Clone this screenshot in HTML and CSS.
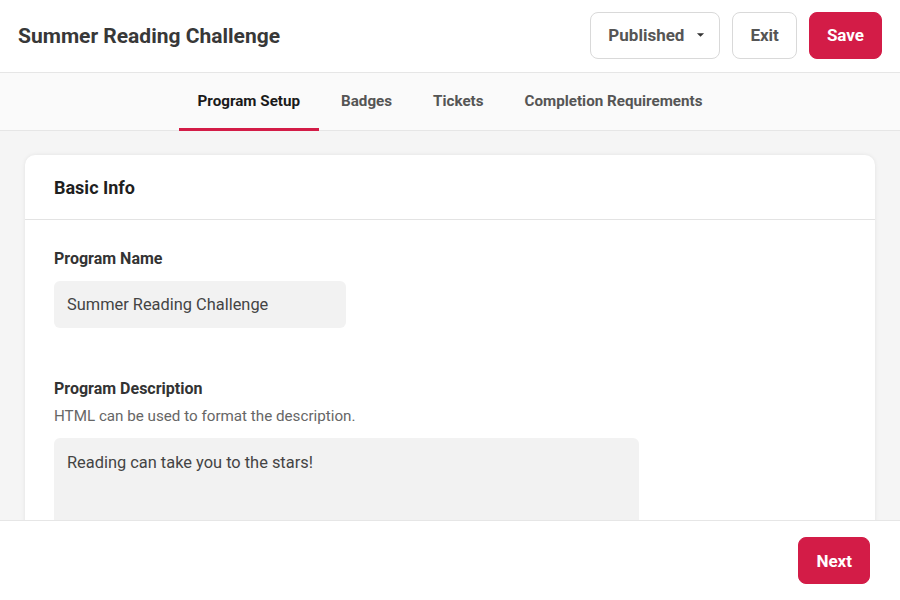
FILE: index.html
```html
<!DOCTYPE html>
<html lang="en">
  <head>
    <meta charset="UTF-8" />
    <title>Summer Reading Challenge</title>
    <link rel="stylesheet" href="styles.css">
  </head>
  <body>
    <header class="topbar">
      <h1 class="title">Summer Reading Challenge</h1>
      <div class="actions">
        <button class="btn btn-outline btn-status">
          Published
          <svg viewBox="0 0 10 6" aria-hidden="true"><path d="M1 1h8L5 5z" /></svg>
        </button>
        <button class="btn btn-outline">Exit</button>
        <button class="btn btn-primary">Save</button>
      </div>
    </header>

    <nav class="tabs">
      <a class="tab active" href="#">Program Setup</a>
      <a class="tab" href="#">Badges</a>
      <a class="tab" href="#">Tickets</a>
      <a class="tab" href="#">Completion Requirements</a>
    </nav>

    <main class="content">
      <section class="card">
        <div class="card-header">Basic Info</div>
        <div class="card-body">
          <div class="field">
            <label class="label">Program Name</label>
            <div class="input">Summer Reading Challenge</div>
          </div>
          <div class="field field-desc">
            <label class="label">Program Description</label>
            <p class="help">HTML can be used to format the description.</p>
            <div class="textarea">Reading can take you to the stars!</div>
          </div>
        </div>
      </section>
    </main>

    <footer class="footer">
      <button class="btn btn-primary btn-next">Next</button>
    </footer>
  </body>
</html>
```

FILE: styles.css
```css
body {
  margin: 0;
  height: 100vh;
  display: flex;
  flex-direction: column;
  font-family: Roboto, "Liberation Sans", sans-serif;
  color: #333;
  background-color: #f5f5f5;
  overflow: hidden;
}
/* Barra superior */
.topbar {
  height: 72px;
  flex-shrink: 0;
  display: flex;
  align-items: center;
  justify-content: space-between;
  padding: 0 18px 0 18px;
  background-color: #fff;
  border-bottom: 1px solid #e6e6e6;
}
.title {
  margin: 0;
  font-size: 21px;
  font-weight: 700;
  color: #383838;
}
.actions {
  display: flex;
  gap: 12px;
  margin-top: -2px;
}
.btn {
  height: 47px;
  padding: 0 17px;
  border-radius: 8px;
  font-family: inherit;
  font-size: 17px;
  font-weight: 700;
  cursor: pointer;
  display: flex;
  align-items: center;
}
.btn-outline {
  background-color: #fff;
  border: 1px solid #d9d9d9;
  color: #555;
}
.btn-status {
  padding: 0 14px 0 17px;
  gap: 10px;
}
.btn-status svg {
  width: 9px;
  height: 6px;
  fill: #333;
  margin-left: 2px;
}
.btn-primary {
  background-color: #d31c47;
  border: 1px solid #d31c47;
  color: #fff;
}
/* Abas */
.tabs {
  height: 57px;
  flex-shrink: 0;
  display: flex;
  justify-content: center;
  gap: 3px;
  background-color: #fafafa;
  border-bottom: 1px solid #e6e6e6;
}
.tab {
  display: flex;
  align-items: center;
  padding: 0 19px;
  border-bottom: 3px solid transparent;
  margin-bottom: -1px;
  text-decoration: none;
  font-size: 15.2px;
  font-weight: 700;
  color: #555;
}
.tab.active {
  color: #1a1a1a;
  border-bottom-color: #d31c47;
}
/* Conteudo */
.content {
  flex: 1;
  min-height: 0;
  overflow: hidden;
  padding: 24px 25px 0;
}
.card {
  background-color: #fff;
  border-radius: 10px 10px 0 0;
  box-shadow: 0 0 4px rgba(0, 0, 0, 0.08);
  min-height: 100%;
}
.card-header {
  height: 64px;
  display: flex;
  align-items: center;
  padding: 0 29px;
  border-bottom: 1px solid #e3e3e3;
  font-size: 18px;
  font-weight: 700;
  color: #1f1f1f;
}
.card-body {
  padding: 29px 29px;
}
.field {
  display: flex;
  flex-direction: column;
}
.field-desc {
  margin-top: 51px;
}
.label {
  font-size: 16px;
  font-weight: 700;
  color: #333;
  margin-bottom: 13px;
}
.help {
  margin: -4px 0 13px;
  font-size: 15.2px;
  color: #666;
}
.input,
.textarea {
  background-color: #f2f2f2;
  border-radius: 6px;
  padding: 0 13px;
  font-size: 16.4px;
  color: #444;
}
.input {
  width: 266px;
  height: 47px;
  display: flex;
  align-items: center;
}
.textarea {
  width: 559px;
  height: 120px;
  padding-top: 15px;
}
/* Rodape */
.footer {
  height: 79px;
  flex-shrink: 0;
  display: flex;
  align-items: center;
  justify-content: flex-end;
  padding: 0 30px;
  background-color: #fff;
  border-top: 1px solid #e6e6e6;
}
.btn-next {
  padding: 0 17px;
}
```
